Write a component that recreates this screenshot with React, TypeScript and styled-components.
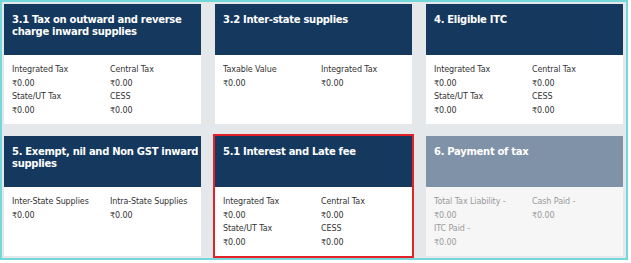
import * as React from 'react';
import styled, { createGlobalStyle } from 'styled-components';

const GlobalStyle = createGlobalStyle`
  html, body {
    margin: 0;
    padding: 0;
    background: #ffffff;
  }
  body {
    font-family: "DejaVu Sans", Verdana, sans-serif;
  }
`;

const Frame = styled.div`
  box-sizing: border-box;
  width: 628px;
  height: 260px;
  border: 2px solid #74d7d9;
  background: #e4e8eb;
  padding: 2px;
`;

const Grid = styled.div`
  display: grid;
  grid-template-columns: repeat(3, 197px);
  grid-template-rows: repeat(2, 120px);
  column-gap: 14px;
  row-gap: 12px;
`;

const Card = styled.div<{ $muted?: boolean; $selected?: boolean }>`
  box-sizing: border-box;
  display: flex;
  flex-direction: column;
  background: ${(p) => (p.$muted ? '#f6f6f6' : '#ffffff')};
  outline: ${(p) => (p.$selected ? '2px solid #e3222a' : 'none')};
  outline-offset: 0;
`;

const Header = styled.div<{ $muted?: boolean }>`
  box-sizing: border-box;
  height: 51px;
  flex: none;
  padding: 10px 0 0 8px;
  background: ${(p) => (p.$muted ? '#7f92a7' : '#15385f')};
  color: #ffffff;
  font-size: 10px;
  font-weight: bold;
  line-height: 12px;
  letter-spacing: -0.3px;
`;

const Body = styled.div`
  display: grid;
  grid-template-columns: 98px 1fr;
  grid-auto-rows: 13.5px;
  align-content: start;
  padding: 8px 4px 0 8px;
`;

const Cell = styled.div<{ $muted?: boolean }>`
  font-size: 8px;
  line-height: 13.5px;
  letter-spacing: -0.1px;
  white-space: nowrap;
  color: ${(p) => (p.$muted ? '#9a9a9a' : '#333333')};
`;

type Item = { label: string; value: string };

type CardData = {
  title: string;
  items: Item[];
  muted?: boolean;
  selected?: boolean;
};

const fourTaxes: Item[] = [
  { label: 'Integrated Tax', value: '₹0.00' },
  { label: 'Central Tax', value: '₹0.00' },
  { label: 'State/UT Tax', value: '₹0.00' },
  { label: 'CESS', value: '₹0.00' },
];

const cards: CardData[] = [
  { title: '3.1 Tax on outward and reverse charge inward supplies', items: fourTaxes },
  {
    title: '3.2 Inter-state supplies',
    items: [
      { label: 'Taxable Value', value: '₹0.00' },
      { label: 'Integrated Tax', value: '₹0.00' },
    ],
  },
  { title: '4. Eligible ITC', items: fourTaxes },
  {
    title: '5. Exempt, nil and Non GST inward supplies',
    items: [
      { label: 'Inter-State Supplies', value: '₹0.00' },
      { label: 'Intra-State Supplies', value: '₹0.00' },
    ],
  },
  { title: '5.1 Interest and Late fee', items: fourTaxes, selected: true },
  {
    title: '6. Payment of tax',
    muted: true,
    items: [
      { label: 'Total Tax Liability -', value: '₹0.00' },
      { label: 'Cash Paid -', value: '₹0.00' },
      { label: 'ITC Paid -', value: '₹0.00' },
    ],
  },
];

// two items per row pair: labels on one line, values on the next
const toRows = (items: Item[]) => {
  const cells: Item[][] = [];
  for (let i = 0; i < items.length; i += 2) cells.push(items.slice(i, i + 2));
  return cells;
};

const SummaryCard: React.FC<{ data: CardData }> = ({ data }) => (
  <Card $muted={data.muted} $selected={data.selected}>
    <Header $muted={data.muted}>{data.title}</Header>
    <Body>
      {toRows(data.items).map((pair, r) => (
        <React.Fragment key={r}>
          {pair.map((it, c) => (
            <Cell key={'l' + c} $muted={data.muted}>{it.label}</Cell>
          ))}
          {pair.length < 2 && <Cell />}
          {pair.map((it, c) => (
            <Cell key={'v' + c} $muted={data.muted}>{it.value}</Cell>
          ))}
          {pair.length < 2 && <Cell />}
        </React.Fragment>
      ))}
    </Body>
  </Card>
);

export default function App() {
  return (
    <>
      <GlobalStyle />
      <Frame>
        <Grid>
          {cards.map((c) => (
            <SummaryCard key={c.title} data={c} />
          ))}
        </Grid>
      </Frame>
    </>
  );
}
